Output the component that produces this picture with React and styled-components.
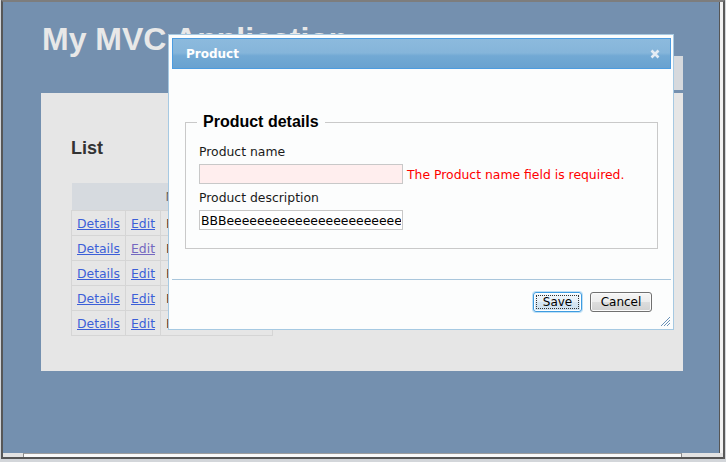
import React from 'react'
import styled, { createGlobalStyle } from 'styled-components'

const GlobalStyle = createGlobalStyle`
    html, body {
        margin: 0;
        padding: 0;
        background: #d3d6da;
    }
    body {
        width: 726px;
        height: 462px;
        overflow: hidden;
    }
`

const dialogFont = `"DejaVu Sans", Verdana, sans-serif`

export const Screen = styled.div`
    position: relative;
    width: 726px;
    height: 462px;
    overflow: hidden;
    background: #d3d6da;
`
export const Window = styled.div`
    height: 459px;
    margin: 0 1px;
    box-sizing: border-box;
    border-top: 2px solid #7d7d7d;
    border-left: 2px solid #575757;
    border-right: 2px solid #5a5a5a;
    display: flex;
    flex-direction: column;
`
export const WindowBody = styled.div`
    flex: 1;
    display: flex;
    min-height: 0;
`
export const Viewport = styled.div`
    flex: 1;
    background: #7490af;
    padding: 21px 0 0 38px;
    overflow: hidden;
`
export const ScrollEdge = styled.div`
    width: 4px;
    box-sizing: border-box;
    border-left: 1px solid #555;
    background: #f1f1f1;
`
export const StatusBar = styled.div`
    height: 6px;
    box-sizing: border-box;
    border-bottom: 2px solid #555;
    background: #e3e3e3;
    display: flex;
    padding-left: 20px;
`
export const StatusField = styled.div`
    width: 659px;
    box-sizing: border-box;
    border-top: 1px solid #9e9e9e;
    border-left: 1px solid #8a8a8a;
    border-right: 1px solid #8a8a8a;
    background: #fafafa;
`
export const Page = styled.div`
    width: 642px;
    display: flex;
    flex-direction: column;
`
export const SiteTitle = styled.h1`
    margin: 0;
    padding-left: 1px;
    height: 32px;
    font-family: "Liberation Sans", Arial, sans-serif;
    font-size: 32px;
    line-height: 32px;
    font-weight: bold;
    color: #e8e8e8;
    white-space: nowrap;
`
export const MenuStrip = styled.div`
    align-self: flex-end;
    width: 280px;
    height: 34px;
    margin-top: 1px;
    background: #d6d9dd;
`
export const Panel = styled.div`
    margin-top: 3px;
    height: 278px;
    box-sizing: border-box;
    background: #e6e6e6;
    padding: 44px 30px;
`
export const Heading = styled.h2`
    margin: 0;
    font-family: "Liberation Sans", Arial, sans-serif;
    font-size: 18px;
    line-height: 22px;
    font-weight: bold;
    color: #333;
`
export const Table = styled.table`
    margin-top: 24px;
    width: 202px;
    border-collapse: collapse;
    font-family: ${dialogFont};
    font-size: 12.4px;
    th {
        background: #d6dadf;
        height: 27px;
        padding: 0 5px;
        text-align: left;
        font-weight: normal;
        color: #666;
    }
    td {
        height: 24px;
        padding: 0 5px;
        border: 1px solid #d5d5d5;
        color: #333;
        white-space: nowrap;
    }
`
export const Link = styled.a`
    color: ${p => (p.$visited ? '#7468c0' : '#3c5fd8')};
    text-decoration: underline;
    cursor: pointer;
`

export const Dialog = styled.div`
    position: absolute;
    left: 168px;
    top: 34px;
    width: 506px;
    height: 296px;
    box-sizing: border-box;
    border: 1px solid #a6c9e2;
    padding: 3px 2px 3px 3px;
    background: #fcfdfd;
    display: flex;
    flex-direction: column;
    font-family: ${dialogFont};
`
export const TitleBar = styled.div`
    height: 31px;
    box-sizing: border-box;
    border: 1px solid #4c9ce0;
    background: linear-gradient(to bottom, #8cbadd 0%, #85b5da 48%, #72a9d4 58%, #69a2d0 100%);
    display: flex;
    align-items: center;
    justify-content: space-between;
    padding: 1px 10px 0 13px;
`
export const DialogTitle = styled.span`
    color: #fff;
    font-weight: bold;
    font-size: 12px;
`
export const CloseButton = styled.span`
    display: flex;
    width: 10px;
    height: 10px;
`
export const DialogContent = styled.div`
    height: 210px;
    box-sizing: border-box;
    padding: 44px 13px 0 13px;
`
export const Fieldset = styled.fieldset`
    margin: 0;
    border: 1px solid #c9c9c9;
    padding: 12px 13px 13px 13px;
`
export const Legend = styled.legend`
    margin-left: -2px;
    padding: 0 6px;
    font-family: "Liberation Sans", Arial, sans-serif;
    font-size: 16px;
    line-height: 18px;
    font-weight: bold;
    color: #000;
`
export const FieldLabel = styled.label`
    display: block;
    font-size: 12.4px;
    line-height: 18px;
    color: #1a1a1a;
`
export const FieldRow = styled.div`
    display: flex;
    align-items: center;
    margin: 3px 0 5px;
`
export const TextInput = styled.input`
    width: 204px;
    height: 20px;
    box-sizing: border-box;
    margin: 0;
    padding: 0 1px;
    border: 1px solid #c8c8c8;
    background: ${p => (p.$invalid ? '#ffeeee' : '#ffffff')};
    font-family: ${dialogFont};
    font-size: 12.4px;
    color: #000;
    outline: none;
`
export const ErrorText = styled.span`
    margin-left: 4px;
    font-size: 12.4px;
    color: #ff0000;
    white-space: nowrap;
`
export const ButtonPane = styled.div`
    flex: 1;
    border-top: 1px solid #a9c6dc;
    display: flex;
    justify-content: flex-end;
    align-items: flex-start;
    gap: 8px;
    padding: 12px 19px 0 0;
`
export const DialogButton = styled.button`
    position: relative;
    width: ${p => p.$width}px;
    height: 20px;
    box-sizing: border-box;
    margin: 0;
    padding: 0;
    border-radius: 3px;
    font-family: ${dialogFont};
    font-size: 12px;
    color: #000;
    border: 1px solid ${p => (p.$focused ? '#3d9be0' : '#707070')};
    background: ${p =>
        p.$focused
            ? 'linear-gradient(#f2f8fc, #e5eff7 50%, #d6e7f3 51%, #cde0ee)'
            : 'linear-gradient(#f6f6f6, #ececec 50%, #dddddd 51%, #d1d1d1)'};
    box-shadow: ${p => (p.$focused ? '0 0 0 1px #bfe0f6, inset 0 0 0 1px #fff' : 'inset 0 0 0 1px #fbfbfb')};
    &::after {
        content: '';
        display: ${p => (p.$focused ? 'block' : 'none')};
        position: absolute;
        inset: 2px;
        border: 1px dotted #333;
    }
`
export const ResizeHandle = styled.span`
    position: absolute;
    right: 2px;
    bottom: 2px;
    width: 12px;
    height: 12px;
    display: flex;
`

const rows = [1, 2, 3, 4, 5]

export default function App() {
    return (
        <Screen>
            <GlobalStyle />
            <Window>
                <WindowBody>
                    <Viewport>
                        <Page>
                            <SiteTitle>My MVC Application</SiteTitle>
                            <MenuStrip />
                            <Panel>
                                <Heading>List</Heading>
                                <Table>
                                    <thead>
                                        <tr>
                                            <th style={{ width: 44 }}></th>
                                            <th style={{ width: 25 }}></th>
                                            <th>Name</th>
                                        </tr>
                                    </thead>
                                    <tbody>
                                        {rows.map(n => (
                                            <tr key={n}>
                                                <td><Link>Details</Link></td>
                                                <td><Link $visited={n === 2}>Edit</Link></td>
                                                <td>Product {n}</td>
                                            </tr>
                                        ))}
                                    </tbody>
                                </Table>
                            </Panel>
                        </Page>
                    </Viewport>
                    <ScrollEdge />
                </WindowBody>
                <StatusBar>
                    <StatusField />
                </StatusBar>
            </Window>

            <Dialog>
                <TitleBar>
                    <DialogTitle>Product</DialogTitle>
                    <CloseButton>
                        <svg width="10" height="10" viewBox="0 0 10 10">
                            <path d="M1.5 1.5 L8.5 8.5 M8.5 1.5 L1.5 8.5" stroke="#e4ecf4" strokeWidth="2.6" />
                        </svg>
                    </CloseButton>
                </TitleBar>
                <DialogContent>
                    <Fieldset>
                        <Legend>Product details</Legend>
                        <FieldLabel>Product name</FieldLabel>
                        <FieldRow>
                            <TextInput $invalid defaultValue="" readOnly />
                            <ErrorText>The Product name field is required.</ErrorText>
                        </FieldRow>
                        <FieldLabel>Product description</FieldLabel>
                        <FieldRow>
                            <TextInput defaultValue="BBBeeeeeeeeeeeeeeeeeeeeeeeeee" readOnly />
                        </FieldRow>
                    </Fieldset>
                </DialogContent>
                <ButtonPane>
                    <DialogButton $focused $width={49}>Save</DialogButton>
                    <DialogButton $width={62}>Cancel</DialogButton>
                </ButtonPane>
                <ResizeHandle>
                    <svg width="12" height="12" viewBox="0 0 12 12">
                        <path d="M11 2 L2 11 M11 5 L5 11 M11 8 L8 11" stroke="#6b92b8" strokeWidth="1" />
                    </svg>
                </ResizeHandle>
            </Dialog>
        </Screen>
    )
}
